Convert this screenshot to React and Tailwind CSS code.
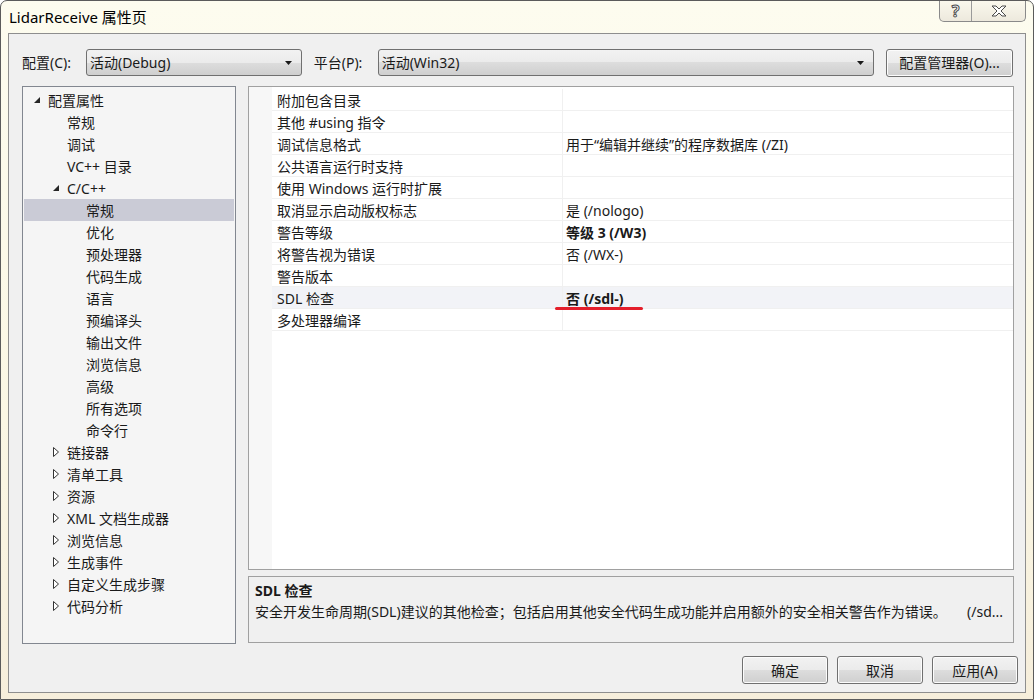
import React from "react";

const FONT = { fontFamily: "'Noto Sans', 'Noto Sans CJK SC', sans-serif" };

function Expanded() {
  return (
    <svg width="6" height="6" viewBox="0 0 6 6" className="shrink-0">
      <path d="M6 0 L6 6 L0 6 Z" fill="#262626" />
    </svg>
  );
}

function Collapsed() {
  return (
    <svg width="6" height="10" viewBox="0 0 6 10" className="shrink-0">
      <path d="M0.5 0.5 L5.5 5 L0.5 9.5 Z" fill="white" stroke="#333" strokeWidth="1" />
    </svg>
  );
}

const tree = [
  { t: "配置属性", lvl: 0, icon: "exp" },
  { t: "常规", lvl: 1 },
  { t: "调试", lvl: 1 },
  { t: "VC++ 目录", lvl: 1 },
  { t: "C/C++", lvl: 1, icon: "exp" },
  { t: "常规", lvl: 2, sel: true },
  { t: "优化", lvl: 2 },
  { t: "预处理器", lvl: 2 },
  { t: "代码生成", lvl: 2 },
  { t: "语言", lvl: 2 },
  { t: "预编译头", lvl: 2 },
  { t: "输出文件", lvl: 2 },
  { t: "浏览信息", lvl: 2 },
  { t: "高级", lvl: 2 },
  { t: "所有选项", lvl: 2 },
  { t: "命令行", lvl: 2 },
  { t: "链接器", lvl: 1, icon: "col" },
  { t: "清单工具", lvl: 1, icon: "col" },
  { t: "资源", lvl: 1, icon: "col" },
  { t: "XML 文档生成器", lvl: 1, icon: "col" },
  { t: "浏览信息", lvl: 1, icon: "col" },
  { t: "生成事件", lvl: 1, icon: "col" },
  { t: "自定义生成步骤", lvl: 1, icon: "col" },
  { t: "代码分析", lvl: 1, icon: "col" },
];

const rows = [
  ["附加包含目录", ""],
  ["其他 #using 指令", ""],
  ["调试信息格式", "用于“编辑并继续”的程序数据库 (/ZI)"],
  ["公共语言运行时支持", ""],
  ["使用 Windows 运行时扩展", ""],
  ["取消显示启动版权标志", "是 (/nologo)"],
  ["警告等级", "等级 3 (/W3)", true],
  ["将警告视为错误", "否 (/WX-)"],
  ["警告版本", ""],
  ["SDL 检查", "否 (/sdl-)", true, true],
  ["多处理器编译", ""],
];

function Combo({ text, className }) {
  return (
    <div
      className={
        "h-[27px] rounded-[3px] border border-[#707070] flex items-center pl-[3px] pr-[9px] " +
        "bg-[linear-gradient(#f2f2f2_0%,#ebebeb_50%,#dddddd_50%,#cfcfcf_100%)] " +
        className
      }
    >
      <span className="flex-1 text-[14px] text-[#1a1a1a] leading-none">{text}</span>
      <svg width="7" height="4" viewBox="0 0 7 4">
        <path d="M0 0 H7 L3.5 4 Z" fill="#1a1a1a" />
      </svg>
    </div>
  );
}

function Btn({ children, className }) {
  return (
    <div
      className={
        "h-[28px] rounded-[3px] border border-[#707070] flex items-center justify-center text-[14px] text-[#1a1a1a] " +
        "bg-[linear-gradient(#f2f2f2_0%,#ebebeb_50%,#dddddd_50%,#cfcfcf_100%)] shadow-[inset_0_0_0_1px_#fcfcfc] " +
        className
      }
    >
      {children}
    </div>
  );
}

export default function App() {
  return (
    <div
      style={FONT}
      className="w-[1034px] h-[700px] relative overflow-hidden bg-[linear-gradient(180deg,#fdfcef_0%,#fbf7e4_60%,#f6eedb_100%)] rounded-t-[7px] border border-[#5b5b5b] flex flex-col"
    >
      {/* title bar */}
      <div className="h-[32px] shrink-0 flex items-start relative">
        <div className="pl-[8px] pt-[6px] text-[15px] leading-[20px] text-black">LidarReceive 属性页</div>
        <div className="absolute right-[7px] top-[-1px] flex h-[22px] border border-[#8a8a8a] border-t-0 rounded-b-[5px] overflow-hidden bg-[linear-gradient(#fbf9ee,#ede9dd)]">
          <div className="w-[32px] flex items-center justify-center border-r border-[#9a9a9a]">
            <span className="text-[16px] font-bold text-white leading-none [-webkit-text-stroke:1px_#4a4a4a]">?</span>
          </div>
          <div className="w-[53px] flex items-center justify-center">
            <svg width="16" height="12" viewBox="0 0 16 12">
              <path
                d="M1 1 H5 L8 4 L11 1 H15 L10 6 L15 11 H11 L8 8 L5 11 H1 L6 6 Z"
                fill="white"
                stroke="#4a4a4a"
                strokeWidth="1"
                strokeLinejoin="round"
              />
            </svg>
          </div>
        </div>
      </div>

      {/* client */}
      <div className="mx-[7px] h-[660px] shrink-0 bg-[#f0f0f0] border border-[#8e8e8e] relative flex flex-col text-[#1a1a1a]">
        {/* config row */}
        <div className="flex items-center h-[27px] mt-[15px] pl-[13px] pr-[12px]">
          <span className="text-[14px] w-[64px]">配置(C):</span>
          <Combo text="活动(Debug)" className="w-[216px]" />
          <span className="text-[14px] ml-[12px] w-[64px]">平台(P):</span>
          <Combo text="活动(Win32)" className="w-[497px]" />
          <Btn className="ml-[12px] w-[127px]">配置管理器(O)...</Btn>
        </div>

        {/* main */}
        <div className="flex mt-[10px] pl-[13px] pr-[11px] gap-[12px] h-[558px]">
          {/* tree */}
          <div className="w-[214px] h-[558px] bg-[#f5f5f5] border border-[#828790] pt-[2px] px-[1px]">
            {tree.map((n, i) => (
              <div
                key={i}
                className={"h-[22px] flex items-center text-[14px] " + (n.sel ? "bg-[#cacbd6]" : "")}
              >
                <div
                  className="flex items-center justify-end pr-[8px] shrink-0"
                  style={{ width: n.lvl === 0 ? 24 : n.lvl === 1 ? 43 : 62 }}
                >
                  {n.icon === "exp" && <Expanded />}
                  {n.icon === "col" && <Collapsed />}
                </div>
                <span className="leading-none whitespace-nowrap pt-[1px]">{n.t}</span>
              </div>
            ))}
          </div>

          {/* right */}
          <div className="flex-1 flex flex-col">
            <div className="h-[484px] bg-white border border-[#a0a0a0] flex">
              <div className="w-[23px] bg-[#f7f7f7] shrink-0" />
              <div className="flex-1 pt-[2px]">
                {rows.map(([k, v, bold, hl], i) => (
                  <div
                    key={i}
                    className={"h-[22px] flex border-b border-[#f0f0f0] text-[14px] " + (hl ? "bg-[#f2f3f7]" : "")}
                  >
                    <div className="w-[291px] border-r border-[#f0f0f0] pl-[5px] pt-[1px] flex items-center whitespace-nowrap">
                      {k}
                    </div>
                    <div className={"flex-1 pl-[3px] pt-[1px] flex items-center whitespace-nowrap " + (bold ? "font-bold" : "")}>
                      {v}
                    </div>
                  </div>
                ))}
              </div>
            </div>
            <div className="h-[67px] mt-[6px] bg-[#f0f0f0] border border-[#a0a0a0] px-[6px] pt-[4px]">
              <div className="text-[14px] font-bold leading-[20px]">SDL 检查</div>
              <div className="flex text-[14px] leading-[22px] whitespace-nowrap">
                <span className="flex-1">安全开发生命周期(SDL)建议的其他检查；包括启用其他安全代码生成功能并启用额外的安全相关警告作为错误。</span>
                <span className="pr-[4px]">(/sd...</span>
              </div>
            </div>
          </div>
        </div>

        {/* buttons */}
        <div className="flex justify-end gap-[9px] mt-[12px] pr-[7px]">
          <Btn className="w-[86px]">确定</Btn>
          <Btn className="w-[86px]">取消</Btn>
          <Btn className="w-[86px]">应用(A)</Btn>
        </div>

        {/* red annotation underline */}
        <div className="absolute left-[546px] top-[273px] w-[88px] h-[3px] rounded-full bg-[#e41e2b]" />
      </div>
    </div>
  );
}
